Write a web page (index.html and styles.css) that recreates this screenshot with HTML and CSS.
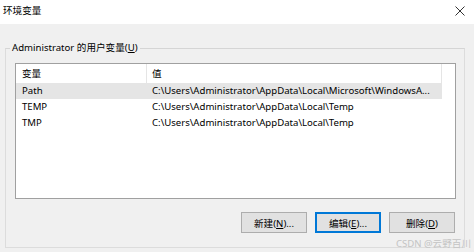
FILE: index.html
```html
<!DOCTYPE html>
<html lang="zh-CN">
<head>
    <meta charset="UTF-8">
    <meta name="viewport" content="width=device-width, initial-scale=1.0">
    <title>环境变量</title>
    <link rel="stylesheet" href="styles.css">
</head>
<body>
    <div class="window">
        <div class="titlebar">
            <span class="title">环境变量</span>
            <svg class="close" width="10" height="10" viewBox="0 0 10 10">
                <path d="M0.5 0.5 L9.5 9.5 M9.5 0.5 L0.5 9.5" stroke="#333" stroke-width="1" fill="none"/>
            </svg>
        </div>
        <div class="content">
            <fieldset class="group">
                <legend>Administrator 的用户变量(<u>U</u>)</legend>
                <div class="listbox">
                    <div class="row header">
                        <div class="cell name">变量</div>
                        <div class="cell value">值</div>
                    </div>
                    <div class="row selected">
                        <div class="cell name">Path</div>
                        <div class="cell value">C:\Users\Administrator\AppData\Local\Microsoft\WindowsA...</div>
                    </div>
                    <div class="row">
                        <div class="cell name">TEMP</div>
                        <div class="cell value">C:\Users\Administrator\AppData\Local\Temp</div>
                    </div>
                    <div class="row">
                        <div class="cell name">TMP</div>
                        <div class="cell value">C:\Users\Administrator\AppData\Local\Temp</div>
                    </div>
                </div>
                <div class="buttons">
                    <button>新建(<u>N</u>)...</button>
                    <button class="default">编辑(<u>E</u>)...</button>
                    <button>删除(<u>D</u>)</button>
                </div>
            </fieldset>
            <div class="watermark">CSDN @云野百川</div>
        </div>
    </div>
</body>
</html>
```

FILE: styles.css
```css
body {
    margin: 0;
    padding: 0;
    font-family: "Noto Sans", "Noto Sans CJK SC", sans-serif;
    font-size: 9.6px;
    color: #000;
    background: #f0f0f0;
}
.window {
    width: 474px;
    height: 252px;
    overflow: hidden;
    display: flex;
    flex-direction: column;
}
.titlebar {
    height: 21px;
    background: #fff;
    display: flex;
    align-items: center;
    justify-content: space-between;
    padding: 0 9px 3px 3px;
}
.title {
    line-height: 16px;
}
.content {
    flex: 1;
    position: relative;
    background: #f0f0f0;
}
.group {
    margin: 16px 9px 0 5px;
    padding: 0 8px 14px 9px;
    border: 1px solid #dcdcdc;
    border-top-color: #d5d5d5;
}
.group legend {
    padding: 0 2px;
    margin-left: -5px;
    line-height: 16px;
}
.listbox {
    margin-top: 7px;
    height: 134px;
    border: 1px solid #a0a0a0;
    background: #fff;
}
.row {
    display: flex;
    height: 16px;
    line-height: 16px;
}
.row.header {
    height: 19px;
    line-height: 19px;
}
.row.selected .cell.name,
.row.selected .cell.value {
    background: #e5e5e5;
}
.cell {
    white-space: nowrap;
    overflow: hidden;
}
.cell.name {
    width: 131px;
    padding-left: 6px;
    box-sizing: border-box;
}
.cell.value {
    width: 295px;
    padding-left: 5px;
    box-sizing: border-box;
}
.header .cell {
    border-right: 1px solid #e5e5e5;
}
.buttons {
    display: flex;
    justify-content: flex-end;
    gap: 8px;
    margin-top: 13px;
    padding-right: 1px;
}
.buttons button {
    width: 66px;
    height: 21px;
    padding: 0;
    font-family: inherit;
    font-size: 9.6px;
    color: #000;
    background: #e1e1e1;
    border: 1px solid #adadad;
    border-radius: 0;
}
.buttons button.default {
    border: 1px solid #0078d7;
    box-shadow: inset 0 0 0 1px #0078d7;
}
.watermark {
    position: absolute;
    right: 3px;
    bottom: 2px;
    font-size: 9.6px;
    color: #c4c4c4;
}
```
